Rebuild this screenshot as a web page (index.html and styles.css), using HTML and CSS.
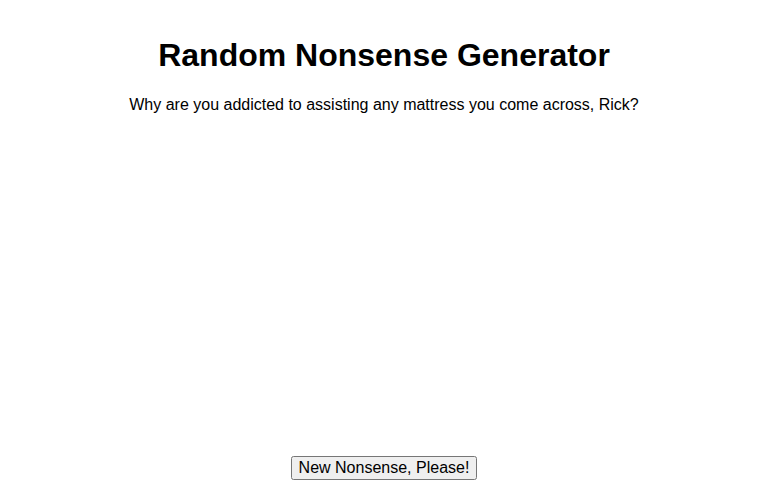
FILE: index.html
```html
<!DOCTYPE html>
<html lang="en">
<head>
<meta charset="utf-8">
<title>Random Nonsense Generator</title>
<link rel="stylesheet" href="styles.css">
</head>
<body>
<main class="app">
  <h1 class="app-title">Random Nonsense Generator</h1>
  <p class="nonsense">Why are you addicted to assisting any mattress you come across, Rick?</p>
  <button class="new-btn" type="button">New Nonsense, Please!</button>
</main>
</body>
</html>
```
FILE: styles.css
```css
html, body {
  margin: 0;
  background: #fff;
}

.app {
  box-sizing: border-box;
  height: 100vh;
  padding-top: 37px;
  display: flex;
  flex-direction: column;
  align-items: center;
  font-family: "Liberation Sans", Arial, sans-serif;
  color: #000;
  text-align: center;
}

.app-title {
  margin: 0 0 22px;
  font-size: 32px;
  font-weight: bold;
}

.nonsense {
  margin: 0;
  font-size: 16px;
}

.new-btn {
  margin-top: auto;
  font-family: "Liberation Sans", Arial, sans-serif;
  font-size: 16px;
}
```
